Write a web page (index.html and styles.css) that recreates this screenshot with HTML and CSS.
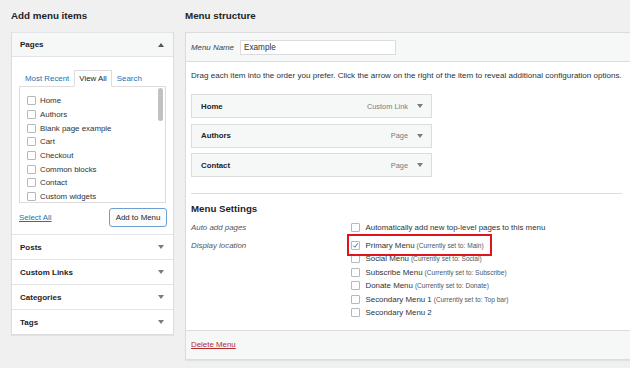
FILE: index.html
```html
<!DOCTYPE html>
<html>
<head>
<meta charset="utf-8">
<link rel="stylesheet" href="styles.css">
</head>
<body>
<div class="page">
  <div class="col-left">
    <h2 class="title">Add menu items</h2>
    <div class="acc">
      <div class="acc-sec open">
        <div class="acc-head"><span>Pages</span><span class="arr up"></span></div>
        <div class="acc-body">
          <div class="tabs">
            <a class="tab">Most Recent</a>
            <span class="tab active">View All</span>
            <a class="tab">Search</a>
          </div>
          <div class="listbox">
            <ul class="plist">
              <li><span class="cb"></span>Home</li>
              <li><span class="cb"></span>Authors</li>
              <li><span class="cb"></span>Blank page example</li>
              <li><span class="cb"></span>Cart</li>
              <li><span class="cb"></span>Checkout</li>
              <li><span class="cb"></span>Common blocks</li>
              <li><span class="cb"></span>Contact</li>
              <li><span class="cb"></span>Custom widgets</li>
            </ul>
            <div class="sbar"><div class="thumb"></div></div>
          </div>
          <div class="actions">
            <a class="selall">Select All</a>
            <button class="btn">Add to Menu</button>
          </div>
        </div>
      </div>
      <div class="acc-sec"><div class="acc-head"><span>Posts</span><span class="arr down"></span></div></div>
      <div class="acc-sec"><div class="acc-head"><span>Custom Links</span><span class="arr down"></span></div></div>
      <div class="acc-sec"><div class="acc-head"><span>Categories</span><span class="arr down"></span></div></div>
      <div class="acc-sec"><div class="acc-head"><span>Tags</span><span class="arr down"></span></div></div>
    </div>
  </div>

  <div class="col-right">
    <h2 class="title">Menu structure</h2>
    <div class="mpanel">
      <div class="mhead">
        <label class="mname">Menu Name</label>
        <div class="minput">Example</div>
      </div>
      <div class="mbody">
        <p class="hint">Drag each item into the order you prefer. Click the arrow on the right of the item to reveal additional configuration options.</p>
        <div class="items">
          <div class="item"><span class="iname">Home</span><span class="itype">Custom Link</span><span class="arr down"></span></div>
          <div class="item"><span class="iname">Authors</span><span class="itype">Page</span><span class="arr down"></span></div>
          <div class="item"><span class="iname">Contact</span><span class="itype">Page</span><span class="arr down"></span></div>
        </div>
        <div class="settings">
          <h3 class="stitle">Menu Settings</h3>
          <div class="srow auto">
            <div class="slabel">Auto add pages</div>
            <div class="sopts">
              <div class="opt"><span class="cb"></span>Automatically add new top-level pages to this menu</div>
            </div>
          </div>
          <div class="srow">
            <div class="slabel">Display location</div>
            <div class="sopts">
              <div class="opt"><span class="hl"><span class="cb checked"><svg viewBox="0 0 10 10" width="9" height="9"><path d="M1.8 5.2 L4 7.4 L8.4 1.8" fill="none" stroke="#2271b1" stroke-width="1.4"/></svg></span>Primary Menu <small>(Currently set to: Main)</small></span></div>
              <div class="opt"><span class="cb"></span>Social Menu <small>(Currently set to: Social)</small></div>
              <div class="opt"><span class="cb"></span>Subscribe Menu <small>(Currently set to: Subscribe)</small></div>
              <div class="opt"><span class="cb"></span>Donate Menu <small>(Currently set to: Donate)</small></div>
              <div class="opt"><span class="cb"></span>Secondary Menu 1 <small>(Currently set to: Top bar)</small></div>
              <div class="opt"><span class="cb"></span>Secondary Menu 2</div>
            </div>
          </div>
        </div>
      </div>
      <div class="mfoot"><a class="del">Delete Menu</a></div>
    </div>
  </div>
</div>
</body>
</html>
```

FILE: styles.css
```css
* { box-sizing: border-box; }
html, body {
  margin: 0;
  padding: 0;
  background: #f0f0f1;
  font-family: "Liberation Sans", Arial, sans-serif;
  font-size: 7.9px;
  color: #2c3338;
  width: 630px;
  height: 368px;
  overflow: hidden;
}
.page {
  display: flex;
  gap: 11px;
  padding-left: 11px;
  white-space: nowrap;
}
.col-left { width: 163px; flex: none; }
.col-right { flex: 1; min-width: 0; }
.title {
  margin: 0;
  padding-top: 8px;
  height: 32px;
  line-height: 16px;
  font-size: 9.8px;
  font-weight: 700;
  color: #1d2327;
}

/* accordion */
.acc {
  background: #fff;
  border: 1px solid #dcdcde;
  border-top: none;
  box-shadow: 0 1px 1px rgba(0,0,0,0.06);
}
.acc-sec { border-top: 1px solid #e4e4e6; }
.acc-head {
  height: 24px;
  display: flex;
  align-items: center;
  justify-content: space-between;
  padding: 0 9px 0 8px;
  font-weight: 700;
  color: #1d2327;
  font-size: 8px;
  background: #fff;
}
.open .acc-head {
  background: #f6f7f7;
  border-bottom: 1px solid #e4e4e6;
}
.arr {
  width: 0; height: 0;
  border-left: 3px solid transparent;
  border-right: 3px solid transparent;
}
.arr.up { border-bottom: 4px solid #50575e; }
.arr.down { border-top: 4px solid #787c82; }

.acc-body { padding: 14px 7px 7px 7px; }
.tabs {
  display: flex;
  align-items: flex-end;
  height: 15px;
  padding-left: 6px;
  gap: 5px;
  position: relative;
  z-index: 1;
}
.tab {
  color: #2271b1;
  line-height: 13px;
  padding: 0 0 1px 0;
}
.tab.active {
  color: #1d2327;
  background: #fff;
  border: 1px solid #dcdcde;
  border-bottom: 1px solid #fff;
  padding: 1px 4px 1px 4px;
  line-height: 13px;
  margin-bottom: -1px;
}
.listbox {
  height: 117px;
  border: 1px solid #dcdcde;
  display: flex;
  overflow: hidden;
  width: 147px;
}
.plist {
  list-style: none;
  margin: 0;
  padding: 7px 0 0 7px;
  flex: 1;
}
.plist li {
  height: 13.7px;
  display: flex;
  align-items: center;
  color: #2c3338;
}
.cb {
  width: 9px;
  height: 9px;
  border: 1px solid #b4b9be;
  border-radius: 1px;
  background: #fff;
  flex: none;
  margin-right: 4px;
  display: inline-flex;
  align-items: center;
  justify-content: center;
}
.cb svg { display: block; }
.sbar {
  width: 8px;
  padding: 1px 2px 0 1px;
}
.thumb {
  width: 5px;
  height: 33px;
  background: #c1c1c1;
  border-radius: 3px;
}
.actions {
  display: flex;
  justify-content: space-between;
  align-items: center;
  margin-top: 5px;
  width: 148px;
}
.selall {
  color: #2271b1;
  text-decoration: underline;
}
.btn {
  font: inherit;
  font-size: 7.9px;
  height: 19px;
  width: 58px;
  padding: 0;
  color: #1d2327;
  background: #fbfbfb;
  border: 1px solid #6e9fd2;
  border-radius: 3px;
}

/* right panel */
.mpanel {
  background: #fff;
  border: 1px solid #dcdcde;
  border-right: none;
  box-shadow: 0 1px 1px rgba(0,0,0,0.06);
}
.mhead {
  height: 29px;
  background: #f6f7f7;
  border-bottom: 1px solid #dcdcde;
  display: flex;
  align-items: center;
  padding-left: 5px;
}
.mname {
  font-style: italic;
  color: #3c434a;
  width: 49px;
}
.minput {
  width: 156px;
  height: 15px;
  border: 1px solid #dcdcde;
  background: #fff;
  line-height: 13px;
  padding-left: 3px;
  color: #2c3338;
  font-size: 8.2px;
}
.mbody { padding: 8px 0 10px 5px; }
.hint {
  margin: 0;
  line-height: 12px;
  color: #2c3338;
  font-size: 8.05px;
}
.items { margin-top: 12px; width: 241px; }
.item {
  height: 24px;
  border: 1px solid #dcdcde;
  background: #f6f7f7;
  display: flex;
  align-items: center;
  padding: 0 8px 0 9px;
  margin-bottom: 5.5px;
}
.item:last-child { margin-bottom: 0; }
.iname { font-weight: 700; color: #1d2327; flex: 1; font-size: 7.8px; }
.itype { color: #787c82; margin-right: 9px; font-size: 7.4px; }

.settings {
  margin-top: 16px;
  border-top: 1px solid #dcdcde;
  margin-right: 8px;
  padding-top: 7px;
}
.stitle {
  margin: 0 0 5px 0;
  font-size: 9.7px;
  font-weight: 700;
  line-height: 15px;
  color: #1d2327;
}
.srow { display: flex; }
.srow.auto { margin-bottom: 4.5px; }
.slabel {
  width: 160px;
  font-style: italic;
  color: #50575e;
  line-height: 13px;
}
.opt {
  height: 13.5px;
  display: flex;
  align-items: center;
  color: #2c3338;
}
.opt .cb { margin-right: 5.5px; }
.srow.auto .opt { height: 13px; }
.opt small {
  font-size: 6.6px;
  color: #50575e;
  margin-left: 2px;
}
.hl {
  position: relative;
  display: inline-flex;
  align-items: center;
}
.hl::after {
  content: "";
  position: absolute;
  left: -4px;
  right: -8px;
  top: -7px;
  bottom: -6px;
  border: 2px solid #e0141e;
}
.mfoot {
  height: 29px;
  background: #f6f7f7;
  border-top: 1px solid #dcdcde;
  display: flex;
  align-items: center;
  padding-left: 5px;
}
.del {
  color: #b32d2e;
  text-decoration: underline;
}
```
